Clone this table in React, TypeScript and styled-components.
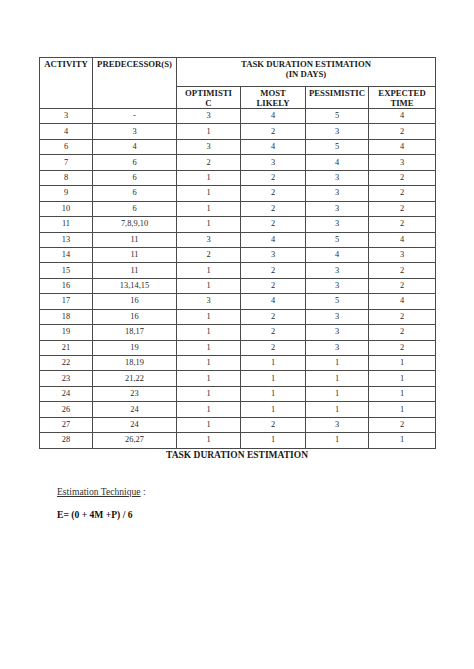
import React from 'react';
import styled, { createGlobalStyle } from 'styled-components';

const GlobalStyle = createGlobalStyle`
    html, body {
        margin: 0;
        padding: 0;
        background: #ffffff;
    }
    body {
        font-family: "Liberation Serif", "Times New Roman", serif;
        color: #1a1a1a;
    }
`

const rows = [
    ['3', '-', '3', '4', '5', '4'],
    ['4', '3', '1', '2', '3', '2'],
    ['6', '4', '3', '4', '5', '4'],
    ['7', '6', '2', '3', '4', '3'],
    ['8', '6', '1', '2', '3', '2'],
    ['9', '6', '1', '2', '3', '2'],
    ['10', '6', '1', '2', '3', '2'],
    ['11', '7,8,9,10', '1', '2', '3', '2'],
    ['13', '11', '3', '4', '5', '4'],
    ['14', '11', '2', '3', '4', '3'],
    ['15', '11', '1', '2', '3', '2'],
    ['16', '13,14,15', '1', '2', '3', '2'],
    ['17', '16', '3', '4', '5', '4'],
    ['18', '16', '1', '2', '3', '2'],
    ['19', '18,17', '1', '2', '3', '2'],
    ['21', '19', '1', '2', '3', '2'],
    ['22', '18,19', '1', '1', '1', '1'],
    ['23', '21,22', '1', '1', '1', '1'],
    ['24', '23', '1', '1', '1', '1'],
    ['26', '24', '1', '1', '1', '1'],
    ['27', '24', '1', '2', '3', '2'],
    ['28', '26,27', '1', '1', '1', '1'],
]

const colWidths = [53, 84, 64, 65, 63, 67]

export default function App() {
    return (
        <>
            <GlobalStyle />
            <Page>
                <TableWrap>
                    <Table>
                        <colgroup>
                            {colWidths.map((w, i) => <col key={i} style={{ width: w }} />)}
                        </colgroup>
                        <thead>
                            <tr>
                                <HeadCell rowSpan={2}>ACTIVITY</HeadCell>
                                <HeadCell rowSpan={2}>PREDECESSOR(S)</HeadCell>
                                <HeadCell colSpan={4} $top>TASK DURATION ESTIMATION<br />(IN DAYS)</HeadCell>
                            </tr>
                            <tr>
                                <SubCell>OPTIMISTI<br />C</SubCell>
                                <SubCell>MOST<br />LIKELY</SubCell>
                                <SubCell>PESSIMISTIC</SubCell>
                                <SubCell>EXPECTED<br />TIME</SubCell>
                            </tr>
                        </thead>
                        <tbody>
                            {rows.map((r, i) => (
                                <Row key={i}>
                                    {r.map((c, j) => <Cell key={j}>{c}</Cell>)}
                                </Row>
                            ))}
                        </tbody>
                    </Table>
                    <Caption>TASK DURATION ESTIMATION</Caption>
                </TableWrap>
                <Notes>
                    <Technique><u>Estimation Technique</u> :</Technique>
                    <Formula>E= (0 + 4M +P) / 6</Formula>
                </Notes>
            </Page>
        </>
    )
}

const Page = styled.div`
    width: 474px;
    height: 669px;
    box-sizing: border-box;
    padding: 57px 0 0 39px;
    background: #fff;
`

const TableWrap = styled.div`
    width: 396px;
`

const Table = styled.table`
    border-collapse: collapse;
    table-layout: fixed;
    width: 396px;
    border: 1px solid #3c3c3c;
`

const HeadCell = styled.th<{ $top?: boolean }>`
    border: 1px solid #4a4a4a;
    padding: 1px 2px 0;
    font-size: 8.7px;
    line-height: 10px;
    font-weight: bold;
    text-align: center;
    vertical-align: top;
    height: ${p => (p.$top ? '29px' : 'auto')};
    box-sizing: border-box;
`

const SubCell = styled.th`
    border: 1px solid #4a4a4a;
    padding: 1px 2px 0;
    height: 21px;
    box-sizing: border-box;
    font-size: 8.7px;
    line-height: 10px;
    font-weight: bold;
    text-align: center;
    vertical-align: top;
`

const Row = styled.tr`
    height: 15.45px;
`

const Cell = styled.td`
    border: 1px solid #4a4a4a;
    padding: 0;
    font-size: 8.4px;
    line-height: 10px;
    text-align: center;
    vertical-align: middle;
    color: #2a2a2a;
`

const Caption = styled.div`
    margin-top: 1px;
    text-align: center;
    font-size: 9.5px;
    line-height: 11px;
    font-weight: bold;
    color: #1a1a1a;
`

const Notes = styled.div`
    padding-left: 18px;
    margin-top: 25px;
    display: flex;
    flex-direction: column;
    gap: 12px;
`

const Technique = styled.div`
    font-size: 9.6px;
    line-height: 11px;
    color: #333;
`

const Formula = styled.div`
    font-size: 9.6px;
    line-height: 11px;
    font-weight: bold;
    color: #111;
`
